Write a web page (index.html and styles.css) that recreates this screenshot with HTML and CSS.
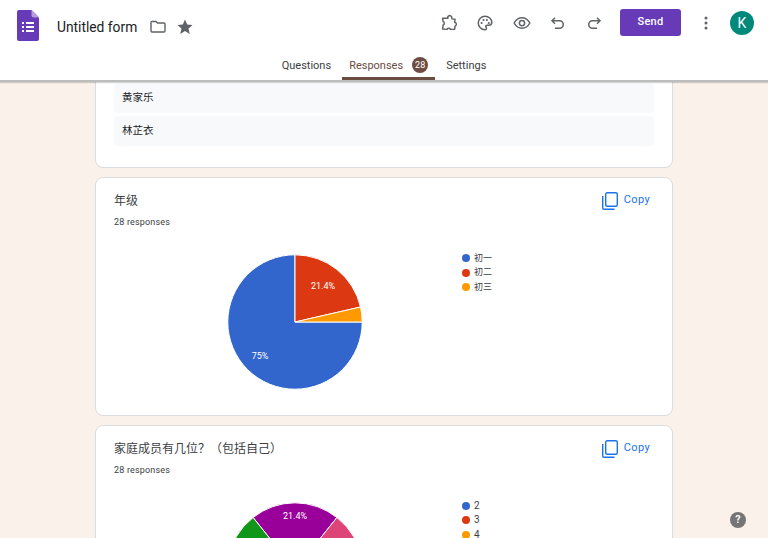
FILE: index.html
```html
<!DOCTYPE html>
<html lang="en">
<head>
<meta charset="utf-8">
<title>Untitled form</title>
<link rel="stylesheet" href="styles.css">
</head>
<body>
<header class="header">
  <div class="topbar">
    <div class="brand">
      <svg class="logo" width="22" height="31" viewBox="0 0 22 31"><path d="M2 0h12.500l7.500 7.500v21.500a2 2 0 0 1-2 2h-18a2 2 0 0 1-2-2v-27a2 2 0 0 1 2-2z" fill="#673ab7"/><path d="M14.500 0l7.500 7.500h-5.500a2 2 0 0 1-2-2z" fill="#b39ddb"/><path d="M5 12h2v2h-2zM9 12h8v2h-8zM5 16h2v2h-2zM9 16h8v2h-8zM5 20h2v2h-2zM9 20h8v2h-8z" fill="#fff"/></svg>
      <span class="form-title">Untitled form</span>
      <svg class="title-icon" width="16" height="13" viewBox="0 0 16 13"><path d="M1 2.500a1 1 0 0 1 1-1h4l1.500 1.500h6.500a1 1 0 0 1 1 1v7a1 1 0 0 1-1 1h-12a1 1 0 0 1-1-1z" fill="none" stroke="#5f6368" stroke-width="1.400"/></svg>
      <svg class="star" width="16" height="16" viewBox="0 0 16 16"><path d="M8 .5l2.200 5 5.400.5-4.100 3.600 1.200 5.300-4.700-2.800-4.700 2.800 1.200-5.300-4.100-3.600 5.400-.5z" fill="#5f6368"/></svg>
    </div>
    <div class="tools">
      <div class="actions">
        <svg class="action" width="18" height="18" viewBox="0 0 24 24"><path d="M10.500 5.500a2.500 2.500 0 0 1 5-1.500l.5 2.500 4 .5-.5 4a2.700 2.700 0 0 1 .5 5.200l-.5 4-5.500.3a2.600 2.600 0 0 0-4.600 0l-5.900-.5.700-5.300a2.500 2.500 0 0 0-.2-4.700l-.5-4.500z" fill="none" stroke="#5f6368" stroke-width="2" stroke-linejoin="round"/></svg>
        <svg class="action" width="18" height="18" viewBox="0 0 24 24"><path d="M12 3a9 9 0 0 0 0 18c1.400 0 2-1 2-1.800 0-1.200-1-1.500-1-2.700 0-1 .8-1.500 1.800-1.500h2.200a4 4 0 0 0 4-4c0-4.500-4-8-9-8z" fill="none" stroke="#5f6368" stroke-width="2"/><circle cx="7.500" cy="12" r="1.400" fill="#5f6368"/><circle cx="10" cy="8" r="1.400" fill="#5f6368"/><circle cx="14.500" cy="8" r="1.400" fill="#5f6368"/><circle cx="17" cy="12" r="1.400" fill="#5f6368"/></svg>
        <svg class="action" width="18" height="18" viewBox="0 0 24 24"><path d="M1.500 12c2.500-4.500 6-7 10.500-7s8 2.500 10.500 7c-2.500 4.500-6 7-10.500 7s-8-2.500-10.500-7z" fill="none" stroke="#5f6368" stroke-width="2"/><circle cx="12" cy="12" r="3.500" fill="none" stroke="#5f6368" stroke-width="2"/></svg>
        <svg class="action" width="18" height="18" viewBox="0 0 24 24"><path d="M8 5l-4 4 4 4M4.500 9h9.500a5 5 0 0 1 0 10h-6" fill="none" stroke="#5f6368" stroke-width="2"/></svg>
        <svg class="action" width="18" height="18" viewBox="0 0 24 24"><path d="M16 5l4 4-4 4M19.500 9h-9.500a5 5 0 0 0 0 10h6" fill="none" stroke="#5f6368" stroke-width="2"/></svg>
      </div>
      <button class="send">Send</button>
      <svg class="more" width="4" height="14" viewBox="0 0 4 14"><circle cx="2" cy="2" r="1.500" fill="#5f6368"/><circle cx="2" cy="7" r="1.500" fill="#5f6368"/><circle cx="2" cy="12" r="1.500" fill="#5f6368"/></svg>
      <div class="avatar">K</div>
    </div>
  </div>
  <nav class="tabs">
    <span class="tab">Questions</span>
    <span class="tab tab-active">Responses <span class="badge">28</span></span>
    <span class="tab">Settings</span>
  </nav>
</header>
<main class="main">
  <section class="card card-cut">
    <div class="answer">黄家乐</div>
    <div class="answer">林芷衣</div>
  </section>
  <section class="card chart-card">
    <div class="card-head">
      <div>
        <h2 class="q-title">年级</h2>
        <p class="q-count">28 responses</p>
      </div>
      <div class="copy">
        <svg width="16" height="18" viewBox="0 0 16 18"><rect x="3.700" y=".7" width="11.600" height="13.600" rx="1.500" fill="none" stroke="#1a73e8" stroke-width="1.400"/><path d="M.7 4v12a1.300 1.300 0 0 0 1.300 1.300h10.500" fill="none" stroke="#1a73e8" stroke-width="1.400"/></svg>
        <span>Copy</span>
      </div>
    </div>
    <div class="chart-row">
      <svg class="pie" width="138" height="138" viewBox="0 0 138 138">
        <path d="M69 69H136.200A67.200 67.200 0 1 1 69 1.800z" fill="#3366cc" stroke="#fff"/>
        <path d="M69 69V1.800A67.200 67.200 0 0 1 134.500 54z" fill="#dc3912" stroke="#fff"/>
        <path d="M69 69L134.500 54A67.200 67.200 0 0 1 136.200 69z" fill="#ff9900" stroke="#fff"/>
        <text x="97" y="35.500" class="slice">21.4%</text>
        <text x="34" y="105.500" class="slice">75%</text>
      </svg>
      <ul class="legend">
        <li><i class="dot dot-blue"></i>初一</li>
        <li><i class="dot dot-red"></i>初二</li>
        <li><i class="dot dot-orange"></i>初三</li>
      </ul>
    </div>
  </section>
  <section class="card chart-card">
    <div class="card-head">
      <div>
        <h2 class="q-title">家庭成员有几位？（包括自己）</h2>
        <p class="q-count">28 responses</p>
      </div>
      <div class="copy">
        <svg width="16" height="18" viewBox="0 0 16 18"><rect x="3.700" y=".7" width="11.600" height="13.600" rx="1.500" fill="none" stroke="#1a73e8" stroke-width="1.400"/><path d="M.7 4v12a1.300 1.300 0 0 0 1.300 1.300h10.500" fill="none" stroke="#1a73e8" stroke-width="1.400"/></svg>
        <span>Copy</span>
      </div>
    </div>
    <div class="chart-row">
      <svg class="pie" width="138" height="138" viewBox="0 0 138 138">
        <path d="M69 69L27.100 16.500A67.200 67.200 0 0 1 110.900 16.500z" fill="#990099" stroke="#fff"/>
        <path d="M69 69L110.900 16.500A67.200 67.200 0 0 1 135.900 60z" fill="#dd4477" stroke="#fff"/>
        <path d="M69 69L27.100 16.500A67.200 67.200 0 0 0 2.100 60z" fill="#109618" stroke="#fff"/>
        <text x="69" y="18" class="slice">21.4%</text>
      </svg>
      <ul class="legend legend-num">
        <li><i class="dot dot-blue"></i>2</li>
        <li><i class="dot dot-red"></i>3</li>
        <li><i class="dot dot-orange"></i>4</li>
      </ul>
    </div>
  </section>
</main>
<div class="help">?</div>
</body>
</html>
```
FILE: styles.css
```css
* { box-sizing: border-box; }
html, body { margin: 0; height: 538px; overflow: hidden; }
body { background: #faf1ea; font-family: Roboto, "Noto Sans CJK SC", sans-serif; color: #202124; }

.header { position: relative; height: 82px; background: #fff; border-bottom: 2px solid #bdbdbd; box-shadow: 0 1px 1px rgba(0,0,0,.16); display: flex; flex-direction: column; }
.topbar { height: 50px; display: flex; align-items: center; padding: 0 14px 0 17px; flex: none; }
.brand { display: flex; align-items: center; margin-top: 3px; }
.logo { flex: none; margin-top: -3px; }
.form-title { font-size: 13.800px; margin-left: 18px; color: #202124; }
.title-icon { margin-left: 13px; }
.star { margin-left: 11px; }
.tools { display: flex; align-items: center; margin-left: auto; margin-top: -5px; }
.actions { display: flex; gap: 18.200px; align-items: center; }
.send { margin-left: 17px; width: 61px; height: 27px; background: #673ab7; color: #fff; border: 0; border-radius: 3px; font: 500 11px Roboto, sans-serif; letter-spacing: .3px; padding: 0 0 2px; }
.more { margin-left: 23px; }
.avatar { margin-left: 22px; width: 24px; height: 24px; border-radius: 50%; background: #00897b; color: #fff; font-size: 14px; display: flex; align-items: center; justify-content: center; }

.tabs { display: flex; justify-content: center; flex: 1; gap: 4px; }
.tab { font-size: 11px; color: #3c4043; padding: 0 7px; height: 30px; display: flex; align-items: center; }
.tab-active { color: #6d4c41; border-bottom: 3px solid #6d4c41; border-radius: 2px 2px 0 0; padding: 3px 7px 0; }
.badge { width: 16px; height: 16px; border-radius: 50%; background: #6d4c41; color: #fff; font-size: 9px; display: flex; align-items: center; justify-content: center; margin-left: 9px; }

.main { width: 578px; margin-left: 95px; display: flex; flex-direction: column; gap: 9px; }
.card { background: #fff; border: 1px solid #dadce0; border-radius: 8px; padding: 0 18px; }
.card-cut { border-top: 0; border-radius: 0 0 8px 8px; height: 86px; display: flex; flex-direction: column; gap: 3px; padding-top: 1px; }
.answer { height: 30px; background: #f8f9fa; border-radius: 4px; font-size: 10.500px; padding: 0 8px 4px; display: flex; align-items: center; color: #202124; }

.chart-card { height: 239px; padding-top: 14px; flex: none; }
.card-head { display: flex; justify-content: space-between; align-items: flex-start; }
.q-title { margin: 0; font-size: 12px; font-weight: 400; line-height: 18px; color: #3c4043; }
.q-count { margin: 6px 0 0; font-size: 9px; letter-spacing: .18px; line-height: 12px; color: #3c4043; }
.copy { display: flex; align-items: center; gap: 6px; color: #1a73e8; font-size: 11px; letter-spacing: .35px; padding-right: 4px; }
.copy span { margin-top: -3px; }

.chart-row { display: flex; align-items: flex-start; margin-top: 24.500px; padding-left: 112px; }
.pie { flex: none; }
.slice { fill: #fff; font-size: 9px; text-anchor: middle; font-family: Roboto, sans-serif; }
.legend { list-style: none; margin: -1.500px 0 0 98px; padding: 0; font-size: 9px; line-height: 1; color: #3c4043; }
.legend li { height: 14.500px; display: flex; align-items: center; gap: 4px; }
.legend-num { font-size: 10px; }
.legend-num li { height: 14.300px; }
.dot { width: 8px; height: 8px; border-radius: 50%; display: block; flex: none; }
.dot-blue { background: #3366cc; }
.dot-red { background: #dc3912; }
.dot-orange { background: #ff9900; }

.help { position: fixed; left: 730px; top: 512px; width: 16px; height: 16px; border-radius: 50%; background: #757575; color: #fff; font: 700 11px/16px Roboto, sans-serif; text-align: center; }
```
